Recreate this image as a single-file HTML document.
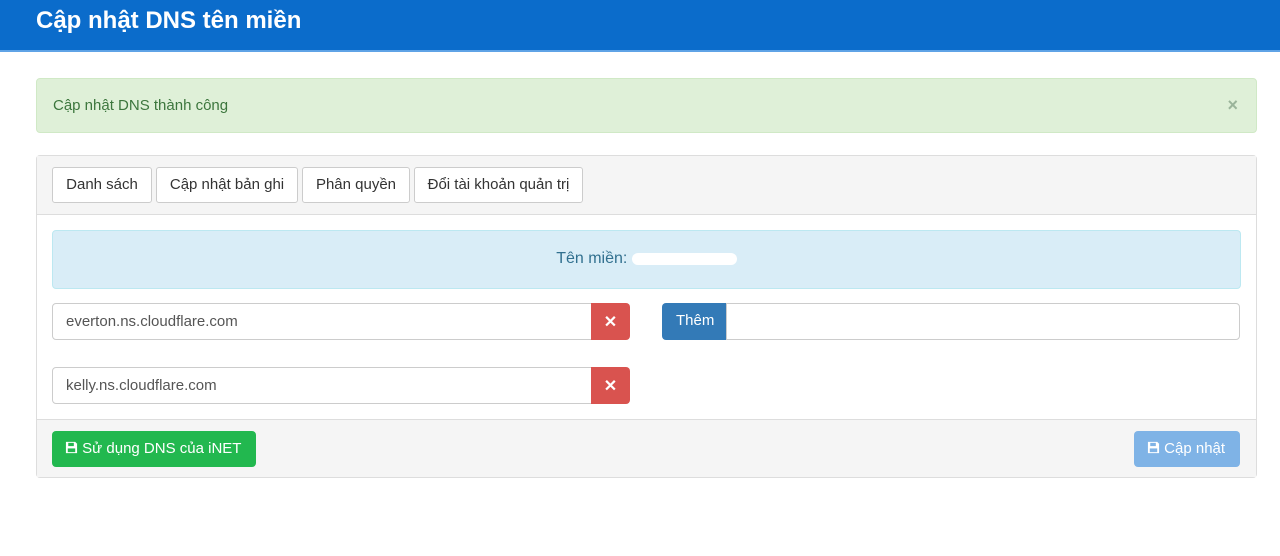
<!DOCTYPE html>
<html><head><meta charset="utf-8"><style>
*{box-sizing:border-box;margin:0;padding:0}
body{width:1280px;height:556px;background:#fff;font-family:"Liberation Sans",Arial,sans-serif;position:relative;overflow:hidden;color:#333}
.hdr{position:absolute;left:0;top:0;width:1280px;height:52px;background:#0b6ccb;border-bottom:2px solid #5fa3e6}
.hdr h1{position:absolute;left:36px;top:7px;color:#fff;font-size:24px;font-weight:bold}
.ok{position:absolute;left:36px;top:78px;width:1221px;height:55px;background:#dff0d8;border:1px solid #d0e9c6;border-radius:4px;color:#3c763d;font-size:15px;padding:18px 0 0 16px}
.ok .x{position:absolute;right:18px;top:16px;color:#9ab49a;font-weight:bold;font-size:18px}
.panel{position:absolute;left:36px;top:155px;width:1221px;height:323px;border:1px solid #ddd;border-radius:4px;background:#fff}
.ph{position:absolute;left:0;top:0;width:100%;height:59px;background:#f5f5f5;border-bottom:1px solid #ddd}
.tab{position:absolute;top:11px;height:36px;border:1px solid #ccc;border-radius:3px;background:#fff;font-size:15px;padding-top:8px;text-align:center;color:#333}
.info{position:absolute;left:15px;top:74px;width:1189px;height:59px;background:#d9edf7;border:1px solid #bce8f1;border-radius:4px;color:#31708f;font-size:16px;text-align:center;padding-top:19px}
.inp{position:absolute;height:37px;border:1px solid #ccc;border-radius:4px 0 0 4px;font-size:15px;color:#555;padding:9px 0 0 13px;background:#fff}
.del{position:absolute;width:39px;height:37px;background:#d9534f;border-radius:0 4px 4px 0;color:#fff;text-align:center;font-size:16px;font-weight:bold;padding-top:9px}
.pf{position:absolute;left:0;top:263px;width:100%;height:58px;background:#f5f5f5;border-top:1px solid #ddd}
.btn{position:absolute;top:11px;height:36px;border-radius:4px;color:#fff;font-size:15px;padding:9px 0 0 13px}
</style></head><body>
<div class="hdr"><h1>Cập nhật DNS tên miền</h1></div>
<div class="ok">Cập nhật DNS thành công<span class="x">×</span></div>
<div class="panel">
 <div class="ph">
  <div class="tab" style="left:15px;width:100px">Danh sách</div>
  <div class="tab" style="left:119px;width:142px">Cập nhật bản ghi</div>
  <div class="tab" style="left:265px;width:108px">Phân quyền</div>
  <div class="tab" style="left:377px;width:169px">Đổi tài khoản quản trị</div>
 </div>
 <div class="info">Tên miền: <span style="display:inline-block;width:105px;height:12px;background:#fff;vertical-align:middle;border-radius:6px"></span></div>
 <div class="inp" style="left:15px;top:147px;width:540px">everton.ns.cloudflare.com</div>
 <div class="del" style="left:554px;top:147px">✕</div>
 <div class="inp" style="left:15px;top:211px;width:540px">kelly.ns.cloudflare.com</div>
 <div class="del" style="left:554px;top:211px">✕</div>
 <div style="position:absolute;left:625px;top:147px;width:65px;height:37px;background:#337ab7;border-radius:4px 0 0 4px;color:#fff;font-size:15px;padding:9px 0 0 14px">Thêm</div>
 <div class="inp" style="left:689px;top:147px;width:514px;border-radius:0 4px 4px 0"></div>
 <div class="pf">
  <div class="btn" style="left:15px;width:204px;background:#22b84f">
   <svg width="13" height="13" viewBox="0 0 14 14" style="vertical-align:-1px"><path d="M1 1h10l2 2v10H1z" fill="#fff"/><rect x="3.5" y="2" width="6" height="3.5" fill="#22b84f"/><rect x="3" y="8" width="8" height="4" fill="#22b84f"/></svg> Sử dụng DNS của iNET</div>
  <div class="btn" style="left:1097px;width:106px;background:#7fb3e6">
   <svg width="13" height="13" viewBox="0 0 14 14" style="vertical-align:-1px"><path d="M1 1h10l2 2v10H1z" fill="#fff"/><rect x="3.5" y="2" width="6" height="3.5" fill="#7fb3e6"/><rect x="3" y="8" width="8" height="4" fill="#7fb3e6"/></svg> Cập nhật</div>
 </div>
</div>
</body></html>
